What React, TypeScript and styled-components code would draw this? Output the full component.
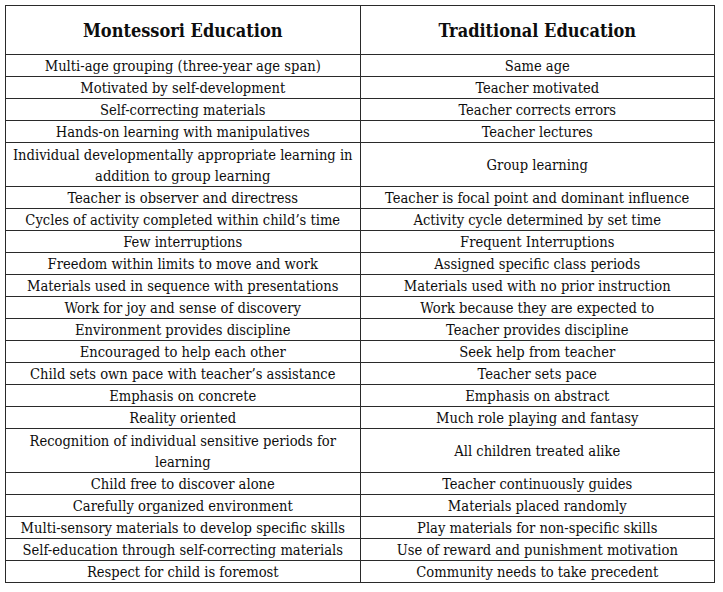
import styled, { createGlobalStyle } from 'styled-components'

const Global = createGlobalStyle`
  body {
    margin: 0;
    background: #fff;
  }
`

const Page = styled.div`
  padding: 5px 0 0 5px;
`

const Table = styled.table`
  border-collapse: collapse;
  table-layout: fixed;
  width: 710px;
  font-family: 'DejaVu Serif Condensed', 'DejaVu Serif', serif;
  color: #0d0d0d;
  border: 1.5px solid #2a2a2a;
`

const Head = styled.th`
  height: 48px;
  padding: 0;
  font-size: 18px;
  font-weight: bold;
  text-align: center;
  vertical-align: middle;
  border: 1px solid #2a2a2a;
`

const Cell = styled.td<{ $tall?: boolean }>`
  height: ${p => (p.$tall ? '43px' : '21px')};
  padding: 0 2px;
  font-size: 14.6px;
  line-height: 21px;
  text-align: center;
  vertical-align: middle;
  border: 1px solid #2a2a2a;
`

const rows: [string, string][] = [
  ['Multi-age grouping (three-year age span)', 'Same age'],
  ['Motivated by self-development', 'Teacher motivated'],
  ['Self-correcting materials', 'Teacher corrects errors'],
  ['Hands-on learning with manipulatives', 'Teacher lectures'],
  ['Individual developmentally appropriate learning in addition to group learning', 'Group learning'],
  ['Teacher is observer and directress', 'Teacher is focal point and dominant influence'],
  ['Cycles of activity completed within child\u2019s time', 'Activity cycle determined by set time'],
  ['Few interruptions', 'Frequent Interruptions'],
  ['Freedom within limits to move and work', 'Assigned specific class periods'],
  ['Materials used in sequence with presentations', 'Materials used with no prior instruction'],
  ['Work for joy and sense of discovery', 'Work because they are expected to'],
  ['Environment provides discipline', 'Teacher provides discipline'],
  ['Encouraged to help each other', 'Seek help from teacher'],
  ['Child sets own pace with teacher\u2019s assistance', 'Teacher sets pace'],
  ['Emphasis on concrete', 'Emphasis on abstract'],
  ['Reality oriented', 'Much role playing and fantasy'],
  ['Recognition of individual sensitive periods for learning', 'All children treated alike'],
  ['Child free to discover alone', 'Teacher continuously guides'],
  ['Carefully organized environment', 'Materials placed randomly'],
  ['Multi-sensory materials to develop specific skills', 'Play materials for non-specific skills'],
  ['Self-education through self-correcting materials', 'Use of reward and punishment motivation'],
  ['Respect for child is foremost', 'Community needs to take precedent'],
]

function App() {
  return (
    <Page>
      <Global />
      <Table>
        <thead>
          <tr>
            <Head>Montessori Education</Head>
            <Head>Traditional Education</Head>
          </tr>
        </thead>
        <tbody>
          {rows.map(([a, b]) => {
            const tall = a.length > 52
            return (
              <tr key={a}>
                <Cell $tall={tall}>{a}</Cell>
                <Cell $tall={tall}>{b}</Cell>
              </tr>
            )
          })}
        </tbody>
      </Table>
    </Page>
  )
}

export default App
